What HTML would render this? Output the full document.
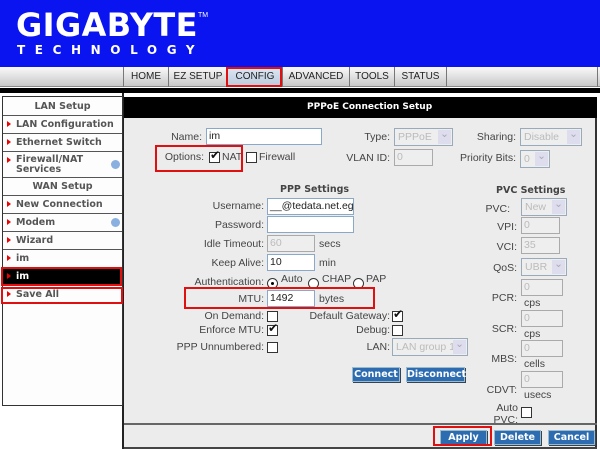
<!DOCTYPE html>
<html><head><meta charset="utf-8"><style>
*{margin:0;padding:0;box-sizing:border-box}
body{width:600px;height:449px;overflow:hidden;background:#fff;font-family:"Liberation Sans","DejaVu Sans",sans-serif;font-size:11px;color:#333;position:relative}
.a{position:absolute}
.hdr{left:0;top:0;width:600px;height:67px;background:#0a14f0}
.nav{left:0;top:67px;width:600px;height:20px;background:linear-gradient(#fafafa,#c8c8c8);border-bottom:1px solid #888}
.tab{position:absolute;top:67px;height:20px;border-left:1px solid #777;font-size:10px;color:#222;text-align:center;line-height:19px}
.lp{left:2px;top:96px;width:121px;height:310px;border:1px solid #333;background:#fdfdfd}
.li{position:absolute;left:0;width:119px;border-bottom:1px solid #555;font-family:"DejaVu Sans",sans-serif;font-weight:bold;font-size:9.5px;color:#555;padding-left:13px;line-height:17px}
.li:before{content:"";position:absolute;left:4px;top:5px;border-left:4px solid #e00;border-top:3.5px solid transparent;border-bottom:3.5px solid transparent}
.li.h{text-align:center;padding-left:0}
.li.h:before{display:none}
.inp{position:absolute;height:17px;border:1px solid #8aa8c8;background:#fff;font-size:10.5px;padding-left:2px;line-height:15px;color:#222;overflow:hidden;white-space:nowrap}
.dis{background:#eee;color:#bbb;border-color:#aaa}
.sel{position:absolute;height:18px;border:1px solid #9ab;background:#eee;color:#bbb;font-size:10.5px;padding-left:3px;line-height:16px;overflow:hidden;white-space:nowrap}
.sel:after{content:"⌄";position:absolute;right:1px;top:1px;width:13px;height:14px;background:#dde;color:#aab;text-align:center;line-height:9px}
.lb{position:absolute;font-size:10.5px;color:#444;text-align:right;white-space:nowrap}
.cb{position:absolute;width:11px;height:11px;border:1px solid #333;background:#fff}
.ck:after{content:"✔";position:absolute;left:0;top:-5px;font-size:12px;color:#111}
.rb{position:absolute;width:11px;height:11px;border:1px solid #333;border-radius:50%;background:#fff}
.btn{position:absolute;height:15px;background:#2d6cb0;color:#fff;font-family:"DejaVu Sans",sans-serif;font-weight:bold;font-size:9.5px;text-align:center;line-height:14px;border:1px solid #9bc;box-shadow:1px 1px 0 #345}
.red{position:absolute;border:2px solid #e01010}
.bh{font-family:"DejaVu Sans",sans-serif;font-weight:bold;font-size:9.5px;color:#444;position:absolute}
</style></head><body>
<div class="a hdr"></div>
<div class="a" style="left:16px;top:6px;font-family:'DejaVu Sans',sans-serif;font-weight:bold;font-size:32px;color:#fff;letter-spacing:0.4px;line-height:38px">GIGABYTE</div>
<div class="a" style="left:198px;top:12px;color:#fff;font-size:7px">TM</div>
<div class="a" style="left:17px;top:43px;font-family:'DejaVu Sans',sans-serif;font-weight:bold;font-size:12px;color:#fff;letter-spacing:9.6px">TECHNOLOGY</div>
<div class="a nav"></div>
<div class="tab" style="left:123px;width:45px">HOME</div>
<div class="tab" style="left:168px;width:59px">EZ SETUP</div>
<div class="tab" style="left:227px;width:55px;background:linear-gradient(#dfe8f4,#b8c8dc)">CONFIG</div>
<div class="tab" style="left:282px;width:67px">ADVANCED</div>
<div class="tab" style="left:349px;width:45px">TOOLS</div>
<div class="tab" style="left:394px;width:52px">STATUS</div>
<div class="tab" style="left:446px;width:152px;border-right:1px solid #777"></div>
<div class="red" style="left:226px;top:67px;width:56px;height:20px"></div>
<div class="a" style="left:0;top:88px;width:600px;height:5px;background:#000"></div>
<div class="a" style="left:0;top:93px;width:600px;height:4px;background:#fff"></div>
<div class="a" style="left:122px;top:93px;width:2px;height:356px;background:#222"></div>
<div class="a" style="left:124px;top:97px;width:473px;height:21px;background:#000;color:#fff;font-family:'DejaVu Sans',sans-serif;font-weight:bold;font-size:9px;line-height:21px;padding-left:183px">PPPoE Connection Setup</div>
<div class="a" style="left:124px;top:118px;width:473px;height:331px;background:#ececec;border-right:2px solid #333"></div>
<div class="a" style="left:124px;top:423px;width:473px;height:2px;background:#666"></div>
<div class="a" style="left:124px;top:447px;width:473px;height:2px;background:#444"></div>

<div class="a lp">
<div class="li h" style="top:0;height:19px;line-height:19px">LAN Setup</div>
<div class="li" style="top:19px;height:18px">LAN Configuration</div>
<div class="li" style="top:37px;height:18px">Ethernet Switch</div>
<div class="li" style="top:55px;height:26px;line-height:10px;padding-top:3px">Firewall/NAT<br>Services<span style="position:absolute;right:2px;top:8px;width:9px;height:9px;border-radius:50%;background:#8ab0e0"></span></div>
<div class="li h" style="top:81px;height:18px">WAN Setup</div>
<div class="li" style="top:99px;height:18px">New Connection</div>
<div class="li" style="top:117px;height:18px">Modem<span style="position:absolute;right:2px;top:4px;width:9px;height:9px;border-radius:50%;background:#8ab0e0"></span></div>
<div class="li" style="top:135px;height:18px">Wizard</div>
<div class="li" style="top:153px;height:18px">im</div>
<div class="li" style="top:171px;height:18px;background:#000;color:#fff">im</div>
<div class="li" style="top:189px;height:17px">Save All</div>
</div>
<div class="red" style="left:1px;top:267px;width:121px;height:19px"></div>
<div class="red" style="left:1px;top:287px;width:122px;height:17px"></div>

<div class="lb" style="left:150px;top:131px;width:52px">Name:</div>
<div class="inp" style="left:206px;top:128px;width:116px">im</div>
<div class="lb" style="left:140px;top:151px;width:64px">Options:</div>
<div class="cb ck" style="left:209px;top:152px"></div>
<div class="lb" style="left:222px;top:151px;text-align:left">NAT</div>
<div class="cb" style="left:246px;top:152px"></div>
<div class="lb" style="left:259px;top:151px;text-align:left">Firewall</div>
<div class="red" style="left:155px;top:145px;width:88px;height:27px"></div>

<div class="lb" style="left:340px;top:131px;width:50px">Type:</div>
<div class="sel" style="left:394px;top:128px;width:59px">PPPoE</div>
<div class="lb" style="left:470px;top:131px;width:46px">Sharing:</div>
<div class="sel" style="left:520px;top:128px;width:62px">Disable</div>
<div class="lb" style="left:320px;top:152px;width:70px">VLAN ID:</div>
<div class="inp dis" style="left:394px;top:149px;width:39px">0</div>
<div class="lb" style="left:440px;top:152px;width:76px">Priority Bits:</div>
<div class="sel" style="left:520px;top:150px;width:30px">0</div>

<div class="bh" style="left:280px;top:184px">PPP Settings</div>
<div class="bh" style="left:496px;top:185px">PVC Settings</div>

<div class="lb" style="left:170px;top:200px;width:94px">Username:</div>
<div class="inp" style="left:267px;top:198px;width:87px">__@tedata.net.eg</div>
<div class="lb" style="left:170px;top:219px;width:94px">Password:</div>
<div class="inp" style="left:267px;top:216px;width:87px"></div>
<div class="lb" style="left:150px;top:238px;width:114px">Idle Timeout:</div>
<div class="inp dis" style="left:267px;top:235px;width:48px">60</div>
<div class="lb" style="left:319px;top:238px;text-align:left">secs</div>
<div class="lb" style="left:170px;top:257px;width:94px">Keep Alive:</div>
<div class="inp" style="left:267px;top:254px;width:48px">10</div>
<div class="lb" style="left:319px;top:257px;text-align:left">min</div>
<div class="lb" style="left:150px;top:276px;width:114px">Authentication:</div>
<div class="rb" style="left:267px;top:278px"><span style="position:absolute;left:3px;top:3px;width:3px;height:3px;background:#000;border-radius:50%"></span></div>
<div class="lb" style="left:281px;top:273px;text-align:left">Auto</div>
<div class="rb" style="left:308px;top:278px"></div>
<div class="lb" style="left:322px;top:273px;text-align:left">CHAP</div>
<div class="rb" style="left:353px;top:278px"></div>
<div class="lb" style="left:366px;top:273px;text-align:left">PAP</div>
<div class="lb" style="left:200px;top:293px;width:64px">MTU:</div>
<div class="inp" style="left:267px;top:290px;width:48px">1492</div>
<div class="lb" style="left:319px;top:293px;text-align:left">bytes</div>
<div class="red" style="left:184px;top:287px;width:191px;height:22px"></div>

<div class="lb" style="left:180px;top:310px;width:84px">On Demand:</div>
<div class="cb" style="left:267px;top:311px"></div>
<div class="lb" style="left:290px;top:310px;width:100px">Default Gateway:</div>
<div class="cb ck" style="left:392px;top:311px"></div>
<div class="lb" style="left:170px;top:324px;width:94px">Enforce MTU:</div>
<div class="cb ck" style="left:267px;top:325px"></div>
<div class="lb" style="left:330px;top:324px;width:60px">Debug:</div>
<div class="cb" style="left:392px;top:325px"></div>
<div class="lb" style="left:150px;top:341px;width:114px">PPP Unnumbered:</div>
<div class="cb" style="left:267px;top:342px"></div>
<div class="lb" style="left:340px;top:341px;width:50px">LAN:</div>
<div class="sel" style="left:392px;top:338px;width:76px;padding-right:14px">LAN group 1</div>
<div class="btn" style="left:352px;top:367px;width:48px">Connect</div>
<div class="btn" style="left:406px;top:367px;width:59px">Disconnect</div>

<div class="lb" style="left:470px;top:203px;width:40px">PVC:</div>
<div class="sel" style="left:521px;top:198px;width:46px">New</div>
<div class="lb" style="left:470px;top:221px;width:47px">VPI:</div>
<div class="inp dis" style="left:521px;top:217px;width:39px">0</div>
<div class="lb" style="left:470px;top:241px;width:47px">VCI:</div>
<div class="inp dis" style="left:521px;top:237px;width:39px">35</div>
<div class="lb" style="left:470px;top:262px;width:47px">QoS:</div>
<div class="sel" style="left:521px;top:258px;width:46px">UBR</div>
<div class="lb" style="left:470px;top:292px;width:47px">PCR:</div>
<div class="inp dis" style="left:521px;top:279px;width:42px">0</div>
<div class="lb" style="left:524px;top:297px;text-align:left">cps</div>
<div class="lb" style="left:470px;top:323px;width:47px">SCR:</div>
<div class="inp dis" style="left:521px;top:310px;width:42px">0</div>
<div class="lb" style="left:524px;top:328px;text-align:left">cps</div>
<div class="lb" style="left:470px;top:353px;width:47px">MBS:</div>
<div class="inp dis" style="left:521px;top:340px;width:42px">0</div>
<div class="lb" style="left:524px;top:358px;text-align:left">cells</div>
<div class="lb" style="left:470px;top:384px;width:47px">CDVT:</div>
<div class="inp dis" style="left:521px;top:371px;width:42px">0</div>
<div class="lb" style="left:524px;top:389px;text-align:left">usecs</div>
<div class="lb" style="left:480px;top:402px;width:38px;line-height:12px">Auto<br>PVC:</div>
<div class="cb" style="left:521px;top:407px"></div>

<div class="btn" style="left:440px;top:430px;width:47px">Apply</div>
<div class="btn" style="left:494px;top:430px;width:47px">Delete</div>
<div class="btn" style="left:548px;top:430px;width:47px">Cancel</div>
<div class="red" style="left:433px;top:426px;width:59px;height:20px"></div>
</body></html>
